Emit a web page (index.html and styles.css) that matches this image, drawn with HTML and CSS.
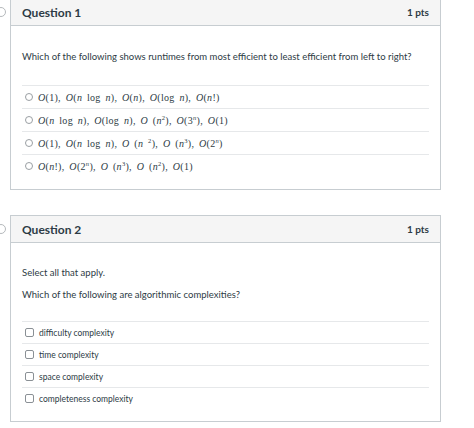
FILE: index.html
```html
<!DOCTYPE html>
<html lang="en">
<head>
    <meta charset="UTF-8">
    <title>Quiz</title>
    <link rel="stylesheet" href="styles.css">
</head>
<body>

    <!-- Question 1 -->
    <div class="question first">
        <span class="flag"></span>
        <div class="question-header">
            <span class="question-title">Question 1</span>
            <span class="points">1 pts</span>
        </div>
        <div class="question-body">
            <p class="question-text">Which of the following shows runtimes from most efficient to least efficient from left to right?</p>
            <div class="answers">
                <label class="answer math-row">
                    <span class="radio"></span>
                    <span class="math"><i>O</i>(1), <i>O</i>(<i>n</i> log <i>n</i>), <i>O</i>(<i>n</i>), <i>O</i>(log <i>n</i>), <i>O</i>(<i>n</i>!)</span>
                </label>
                <label class="answer math-row">
                    <span class="radio"></span>
                    <span class="math"><i>O</i>(<i>n</i> log <i>n</i>), <i>O</i>(log <i>n</i>), <i>O</i> (<i>n</i><sup>2</sup>), <i>O</i>(3<sup><i>n</i></sup>), <i>O</i>(1)</span>
                </label>
                <label class="answer math-row">
                    <span class="radio"></span>
                    <span class="math"><i>O</i>(1), <i>O</i>(<i>n</i> log <i>n</i>), <i>O</i> (<i>n</i> <sup>2</sup>), <i>O</i> (<i>n</i><sup>3</sup>), <i>O</i>(2<sup><i>n</i></sup>)</span>
                </label>
                <label class="answer math-row">
                    <span class="radio"></span>
                    <span class="math"><i>O</i>(<i>n</i>!), <i>O</i>(2<sup><i>n</i></sup>), <i>O</i> (<i>n</i><sup>3</sup>), <i>O</i> (<i>n</i><sup>2</sup>), <i>O</i>(1)</span>
                </label>
            </div>
        </div>
    </div>

    <!-- Question 2 -->
    <div class="question">
        <span class="flag"></span>
        <div class="question-header">
            <span class="question-title">Question 2</span>
            <span class="points">1 pts</span>
        </div>
        <div class="question-body tight">
            <p class="question-text">Select all that apply.</p>
            <p class="question-text second">Which of the following are algorithmic complexities?</p>
            <div class="answers">
                <label class="answer"><span class="checkbox"></span>difficulty complexity</label>
                <label class="answer"><span class="checkbox"></span>time complexity</label>
                <label class="answer"><span class="checkbox"></span>space complexity</label>
                <label class="answer"><span class="checkbox"></span>completeness complexity</label>
            </div>
        </div>
    </div>

</body>
</html>
```

FILE: styles.css
```css
/* Page */
body {
    margin: 0;
    padding: 0 33px 0 10px;
    font-family: 'Lato', 'Liberation Sans', sans-serif;
    color: #2d3b45;
    background: #ffffff;
    overflow: hidden;
}

/* Question card */
.question {
    position: relative;
    border: 1px solid #c7cdd1;
    margin-bottom: 25px;
}

.question.first {
    margin-top: -2px;
}

/* Little flag circle peeking in from the left edge */
.flag {
    position: absolute;
    left: -15px;
    top: 8px;
    width: 8px;
    height: 8px;
    border: 1px solid #b5b9bc;
    border-radius: 50%;
}

.question-header {
    display: flex;
    justify-content: space-between;
    align-items: center;
    height: 26px;
    padding: 0 11px 0 11px;
    background: #f5f5f5;
    border-bottom: 1px solid #c7cdd1;
}

.question-title {
    font-size: 12px;
    font-weight: bold;
}

.points {
    font-size: 10px;
    font-weight: bold;
}

.question-body {
    padding: 23px 11px 12px 11px;
}

.question-body.tight {
    padding-top: 22px;
}

.question-text {
    margin: 0;
    font-size: 9.5px;
    line-height: 16px;
}

.question-text.second {
    margin-top: 6px;
}

.answers {
    margin-top: 20px;
}

.tight .answers {
    margin-top: 18px;
}

/* Answer rows */
.answer {
    display: flex;
    align-items: center;
    height: 21px;
    padding-left: 3px;
    border-top: 1px solid #e6e8ea;
    font-size: 8.5px;
}

.answer.math-row {
    height: 22px;
}

.radio {
    width: 6px;
    height: 6px;
    border: 1px solid #9a9fa3;
    border-radius: 50%;
    margin-right: 5px;
}

.checkbox {
    width: 7px;
    height: 7px;
    border: 1px solid #8a9095;
    border-radius: 2px;
    margin-right: 5px;
}

.math {
    font-family: 'Liberation Serif', 'DejaVu Serif', serif;
    font-size: 10px;
    word-spacing: 2px;
    letter-spacing: 0.3px;
}

.math sup {
    font-size: 6.5px;
    vertical-align: 4px;
    line-height: 0;
}
```
